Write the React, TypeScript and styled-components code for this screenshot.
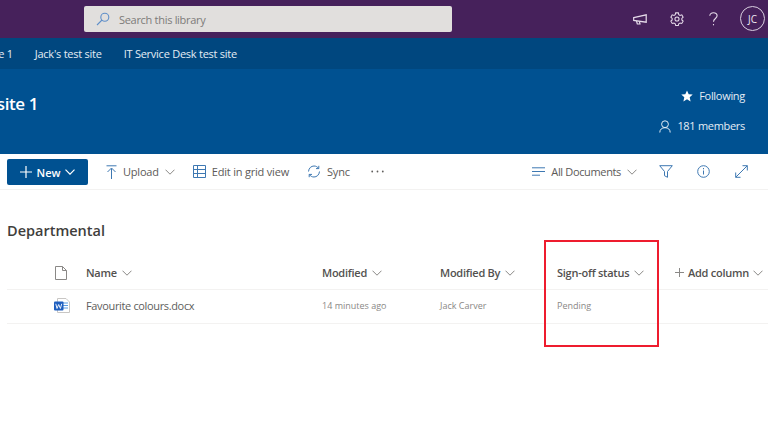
import React from "react";
import styled, { createGlobalStyle } from "styled-components";

const Global = createGlobalStyle`
  html, body { margin: 0; padding: 0; background: #fff; }
  body { font-family: "Open Sans", "Noto Sans", sans-serif; overflow: hidden; }
  * { box-sizing: border-box; }
`;

const Page = styled.div`
  position: relative;
  width: 768px;
  height: 444px;
  overflow: hidden;
  background: #fff;
`;

const SuiteBar = styled.header`
  height: 38px;
  background: #46215b;
  display: flex;
  align-items: center;
  padding: 0 3px 0 84px;
`;

const SearchBox = styled.div`
  width: 368px;
  height: 26px;
  background: #e1dfdd;
  border-radius: 2px;
  display: flex;
  align-items: center;
  gap: 9px;
  padding-left: 12px;
  color: #7d7b79;
  font-size: 11px;
  letter-spacing: -0.3px;
`;

const SuiteIcons = styled.div`
  margin-left: auto;
  display: flex;
  align-items: center;
  color: #e6dcea;
`;

const SuiteIcon = styled.span`
  width: 37px;
  display: flex;
  justify-content: center;
`;

const Avatar = styled.span`
  width: 25px;
  height: 25px;
  margin-left: 8px;
  margin-bottom: 1px;
  border: 1px solid #d9cfe0;
  border-radius: 50%;
  display: flex;
  align-items: center;
  justify-content: center;
  font-size: 10px;
  color: #efe9f2;
`;

const NavBar = styled.nav`
  height: 31px;
  background: #00477f;
  display: flex;
  align-items: center;
  gap: 22px;
  color: #e4edf5;
  font-size: 11px;
  letter-spacing: -0.25px;
  white-space: nowrap;
`;

const NavLink = styled.span<{ $shift?: number }>`
  margin-left: ${(p) => p.$shift ?? 0}px;
`;

const SiteHeader = styled.div`
  height: 85px;
  background: #005191;
  display: flex;
  justify-content: space-between;
  color: #fff;
`;

const SiteTitle = styled.h1`
  margin: 23px 0 0 -40px;
  font-size: 17px;
  line-height: 24px;
  font-weight: 600;
  letter-spacing: -0.4px;
  white-space: nowrap;
`;

const SiteMeta = styled.div`
  display: flex;
  flex-direction: column;
  align-items: flex-end;
  gap: 14px;
  padding: 19px 23px 0 0;
  font-size: 11px;
  letter-spacing: -0.3px;
  line-height: 16px;
  color: #e4edf5;
`;

const MetaRow = styled.div`
  display: flex;
  align-items: center;
  gap: 6px;
`;

const Toolbar = styled.div`
  height: 36px;
  border-bottom: 1px solid #f3f2f1;
  display: flex;
  align-items: center;
  padding: 0 20px 0 7px;
  color: #5c5a58;
  font-size: 11px;
  letter-spacing: -0.2px;
  white-space: nowrap;
`;

const NewButton = styled.div`
  width: 81px;
  height: 26px;
  margin: 1px 18px 0 0;
  background: #005191;
  border-radius: 2px;
  color: #fff;
  font-weight: 600;
  letter-spacing: 0;
  display: flex;
  align-items: center;
  justify-content: center;
  gap: 5px;
`;

const ToolItem = styled.div<{ $tight?: boolean; $after?: number }>`
  display: flex;
  align-items: center;
  gap: 6px;
  margin-right: ${(p) => p.$after ?? 18}px;
  letter-spacing: ${(p) => (p.$tight ? -0.35 : -0.2)}px;
`;

const ToolSpacer = styled.div`
  flex: 1;
`;

const Section = styled.section`
  padding: 31px 0 0 7px;
`;

const LibraryTitle = styled.h2`
  margin: 0;
  font-size: 14.5px;
  line-height: 20px;
  font-weight: 600;
  color: #3f3e3c;
`;

const ListGrid = styled.div`
  display: grid;
  grid-template-columns: 79px 236px 118px 117px 118px 1fr;
  margin-top: 15px;
  white-space: nowrap;
`;

const HeadCell = styled.div<{ $lead?: boolean; $gap?: number }>`
  height: 34px;
  border-bottom: 1px solid #f3f2f1;
  display: flex;
  align-items: center;
  gap: ${(p) => p.$gap ?? 5}px;
  padding-left: ${(p) => (p.$lead ? 48 : 0)}px;
  font-size: 11px;
  font-weight: 600;
  letter-spacing: -0.25px;
  color: #53514f;
`;

const BodyCell = styled.div<{ $lead?: boolean; $name?: boolean }>`
  height: 34px;
  border-bottom: 1px solid #f3f2f1;
  display: flex;
  align-items: center;
  padding: 0 0 2px ${(p) => (p.$lead ? 47 : 0)}px;
  font-size: ${(p) => (p.$name ? 11 : 9)}px;
  letter-spacing: ${(p) => (p.$name ? -0.35 : 0)}px;
  color: ${(p) => (p.$name ? "#605e5c" : "#8a8886")};
`;

const Highlight = styled.div`
  position: absolute;
  left: 544px;
  top: 240px;
  width: 115px;
  height: 107px;
  border: 2.5px solid #ee1c2e;
`;

const Chevron = ({ c = "#8a8886", w = 1 }: { c?: string; w?: number }) => (
  <svg width="10" height="6" viewBox="0 0 10 6" fill="none">
    <path d="M.5.7 5 5.2 9.5.7" stroke={c} strokeWidth={w} />
  </svg>
);

const blue = "#3e78b2";

export default function App() {
  return (
    <Page>
      <Global />
      <SuiteBar>
        <SearchBox>
          <svg width="14" height="14" viewBox="0 0 14 14" fill="none">
            <circle cx="8.8" cy="5.2" r="4" stroke="#5f8fc9" strokeWidth="1.1" />
            <path d="M6 8 1 13" stroke="#5f8fc9" strokeWidth="1.1" />
          </svg>
          Search this library
        </SearchBox>
        <SuiteIcons>
          <SuiteIcon>
            <svg width="14" height="11" viewBox="0 0 14 11" fill="none" stroke="currentColor" strokeWidth="1.2">
              <path d="M.7 3.6 13.2.8v7.4L.7 6.4z" />
              <path d="M3.5 7 4.3 10H7L6.5 7.8" />
            </svg>
          </SuiteIcon>
          <SuiteIcon>
            <svg width="14" height="14" viewBox="0 0 24 24" fill="none" stroke="currentColor" strokeWidth="1.8">
              <path d="M9.7 1.5h4.6l.7 3 2.2 1.3 3-.9 2.3 4-2.2 2.1v2.6l2.2 2.1-2.3 4-3-.9-2.2 1.3-.7 3H9.7l-.7-3-2.2-1.3-3 .9-2.3-4 2.2-2.1V11L1.5 8.9l2.3-4 3 .9L9 4.5z" />
              <circle cx="12" cy="12" r="3.5" />
            </svg>
          </SuiteIcon>
          <SuiteIcon>
            <svg width="9" height="14" viewBox="0 0 9 14" fill="none" stroke="currentColor" strokeWidth="1.1">
              <path d="M.8 3.8C.8 2 2.4.7 4.4.7s3.7 1.2 3.7 3.1c0 2.6-3.6 2.9-3.6 6" />
              <path d="M4.5 12v1.3" />
            </svg>
          </SuiteIcon>
          <Avatar>JC</Avatar>
        </SuiteIcons>
      </SuiteBar>

      <NavBar>
        <NavLink $shift={-36}>Test site 1</NavLink>
        <NavLink>Jack's test site</NavLink>
        <NavLink>IT Service Desk test site</NavLink>
      </NavBar>

      <SiteHeader>
        <SiteTitle>Test site 1</SiteTitle>
        <SiteMeta>
          <MetaRow>
            <svg width="12" height="12" viewBox="0 0 12 12" fill="#fff">
              <path d="M6 .4 7.7 4.2l4 .4-3 2.7.9 4.1L6 9.300l-3.600 2.100.9-4.100-3-2.700 4-.4z" />
            </svg>
            Following
          </MetaRow>
          <MetaRow>
            <svg width="12" height="13" viewBox="0 0 12 13" fill="none" stroke="#e4edf5" strokeWidth="1">
              <circle cx="6" cy="4.2" r="3.4" />
              <path d="M.8 12.5c0-3 2-4.8 5.2-4.8s5.2 1.8 5.2 4.800" />
            </svg>
            181 members
          </MetaRow>
        </SiteMeta>
      </SiteHeader>

      <Toolbar>
        <NewButton>
          <svg width="12" height="12" viewBox="0 0 12 12" stroke="#fff" strokeWidth="1.2">
            <path d="M6 0v12M0 6h12" />
          </svg>
          New
          <Chevron c="#fff" w={1.2} />
        </NewButton>
        <ToolItem $after={18}>
          <svg width="11" height="14" viewBox="0 0 11 14" fill="none" stroke={blue} strokeWidth="1">
            <path d="M.5.8h10M5.5 14V3.5M1.5 7l4-4 4 4" />
          </svg>
          <span>Upload</span>
          <Chevron />
        </ToolItem>
        <ToolItem $after={18}>
          <svg width="13" height="13" viewBox="0 0 13 13" fill="none" stroke={blue} strokeWidth="1">
            <path d="M.5.5h12v12H.5zM.5 4.5h12M.5 8.5h12M4.5.5v12" />
          </svg>
          <span>Edit in grid view</span>
        </ToolItem>
        <ToolItem $after={21}>
          <svg width="14" height="13" viewBox="0 0 14 13" fill="none" stroke={blue} strokeWidth="1">
            <path d="M1.5 6.5C1.8 3 4.3 1 7 1c2 0 3.6.9 4.6 2.5" />
            <path d="M12.5 6.5c-.3 3.5-2.8 5.5-5.500 5.500-2 0-3.600-.9-4.600-2.500" />
            <path d="M11.8.8v2.800H9M2.200 12.200V9.400H5" />
          </svg>
          <span>Sync</span>
        </ToolItem>
        <ToolItem>
          <svg width="13" height="3" viewBox="0 0 13 3" fill="#605e5c">
            <circle cx="1.2" cy="1.5" r=".9" />
            <circle cx="6.5" cy="1.5" r=".9" />
            <circle cx="11.8" cy="1.5" r=".9" />
          </svg>
        </ToolItem>
        <ToolSpacer />
        <ToolItem $after={22} $tight>
          <svg width="13" height="9" viewBox="0 0 13 9" stroke={blue} strokeWidth="1">
            <path d="M0 .8h13M0 4.5h13M0 8.2h8" />
          </svg>
          <span>All Documents</span>
          <Chevron />
        </ToolItem>
        <ToolItem $after={24}>
          <svg width="14" height="13" viewBox="0 0 14 13" fill="none" stroke={blue} strokeWidth="1">
            <path d="M.7.7h12.6L8.500 6.500v5.800l-3-1.600V6.500z" />
          </svg>
        </ToolItem>
        <ToolItem $after={25}>
          <svg width="13" height="13" viewBox="0 0 13 13" fill="none" stroke={blue} strokeWidth="1">
            <circle cx="6.5" cy="6.5" r="5.8" />
            <path d="M6.5 5.500v4M6.500 3v1.300" />
          </svg>
        </ToolItem>
        <ToolItem $after={0}>
          <svg width="13" height="13" viewBox="0 0 13 13" fill="none" stroke={blue} strokeWidth="1">
            <path d="M.7 12.300 12.300.7M7.500.7h4.800v4.800M.7 7.500v4.800h4.800" />
          </svg>
        </ToolItem>
      </Toolbar>

      <Section>
        <LibraryTitle>Departmental</LibraryTitle>
        <ListGrid>
          <HeadCell $lead>
            <svg width="12" height="14" viewBox="0 0 12 14" fill="none" stroke="#8a8886" strokeWidth="1">
              <path d="M.5.5h7l4 4v9H.5zM7.500.5v4h4" />
            </svg>
          </HeadCell>
          <HeadCell>Name <Chevron /></HeadCell>
          <HeadCell>Modified <Chevron /></HeadCell>
          <HeadCell>Modified By <Chevron /></HeadCell>
          <HeadCell>Sign-off status <Chevron /></HeadCell>
          <HeadCell $gap={4}>
            <svg width="9" height="9" viewBox="0 0 9 9" stroke="#8a8886" strokeWidth="1">
              <path d="M4.500 0v9M0 4.500h9" />
            </svg>
            Add column <Chevron />
          </HeadCell>

          <BodyCell $lead>
            <svg width="16" height="15" viewBox="0 0 16 15">
              <path d="M3.500.5h8.500l3.500 3.500v10.500h-12z" fill="#fff" stroke="#c8c6c4" />
              <path d="M9 5h5M9 7.500h5M9 10h5" stroke="#5a9be0" strokeWidth="1" />
              <rect x="0" y="3.500" width="9.500" height="9" rx="1" fill="#1f5fbf" />
              <path d="M1.800 5.800 3 10.500 4.700 6.500 6.400 10.500 7.700 5.800" fill="none" stroke="#fff" strokeWidth=".9" />
            </svg>
          </BodyCell>
          <BodyCell $name>Favourite colours.docx</BodyCell>
          <BodyCell>14 minutes ago</BodyCell>
          <BodyCell>Jack Carver</BodyCell>
          <BodyCell>Pending</BodyCell>
          <BodyCell />
        </ListGrid>
      </Section>

      <Highlight />
    </Page>
  );
}
